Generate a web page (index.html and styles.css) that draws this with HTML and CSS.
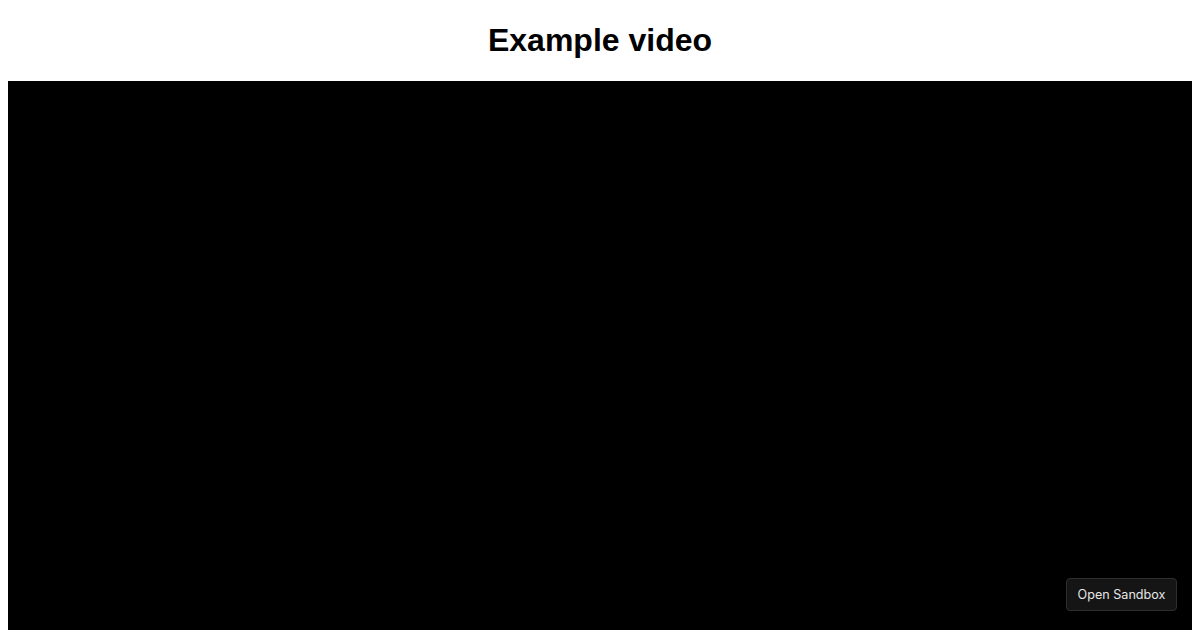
FILE: index.html
```html
<!DOCTYPE html>
<html>
<head>
<meta charset="utf-8">
<link rel="stylesheet" href="styles.css">
</head>
<body>
<h1 class="title">Example video</h1>
<div class="video"></div>
<a class="sandbox-btn">Open Sandbox</a>
</body>
</html>
```
FILE: styles.css
```css
html, body {
  background: #fff;
}
body {
  margin: 8px 8px 0;
  font-family: "Liberation Sans", Arial, sans-serif;
}
.title {
  font-size: 32px;
  font-weight: bold;
  text-align: center;
  margin: 14px 0 22px;
  line-height: 37px;
  color: #000;
}
.video {
  width: 100%;
  height: 549px;
  background: #000;
}
.sandbox-btn {
  position: fixed;
  right: 23px;
  bottom: 19px;
  box-sizing: border-box;
  width: 111px;
  height: 33px;
  display: flex;
  align-items: center;
  justify-content: center;
  background: #151515;
  border: 1px solid #2e2e2e;
  border-radius: 4px;
  color: #e6e6e6;
  font-family: Inter, "Noto Sans", sans-serif;
  font-size: 12.6px;
}
```
